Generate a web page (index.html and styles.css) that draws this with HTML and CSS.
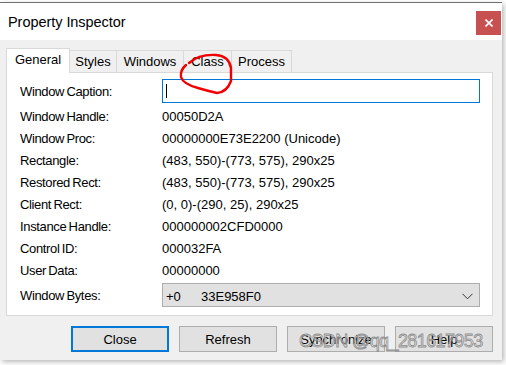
FILE: index.html
```html
<!DOCTYPE html>
<html>
<head>
<meta charset="utf-8">
<link rel="stylesheet" href="styles.css">
</head>
<body>
<div class="window">
  <div class="titlebar">
    <span class="title">Property Inspector</span>
    <div class="close-x">
      <svg width="8" height="8" viewBox="0 0 8 8"><path d="M0.5 0.5 L7.5 7.5 M7.5 0.5 L0.5 7.5" stroke="#fff" stroke-width="1.6"/></svg>
    </div>
  </div>
  <div class="content">
    <div class="tabs">
      <div class="tab tab-general active">General</div>
      <div class="tab tab-styles">Styles</div>
      <div class="tab tab-windows">Windows</div>
      <div class="tab tab-class">Class</div>
      <div class="tab tab-process">Process</div>
    </div>
    <div class="panel">
      <div class="grid">
        <div class="label row-first">Window Caption:</div>
        <div class="input"><span class="caret"></span></div>
        <div class="label">Window Handle:</div><div class="value">00050D2A</div>
        <div class="label">Window Proc:</div><div class="value">00000000E73E2200 (Unicode)</div>
        <div class="label">Rectangle:</div><div class="value">(483, 550)-(773, 575), 290x25</div>
        <div class="label">Restored Rect:</div><div class="value">(483, 550)-(773, 575), 290x25</div>
        <div class="label">Client Rect:</div><div class="value">(0, 0)-(290, 25), 290x25</div>
        <div class="label">Instance Handle:</div><div class="value">000000002CFD0000</div>
        <div class="label">Control ID:</div><div class="value">000032FA</div>
        <div class="label">User Data:</div><div class="value">00000000</div>
        <div class="label row-last">Window Bytes:</div>
        <div class="combo">
          <span class="combo-off">+0</span><span class="combo-val">33E958F0</span>
          <svg class="chev" width="11" height="7" viewBox="0 0 11 7"><path d="M0.5 0.8 L5.5 5.8 L10.5 0.8" fill="none" stroke="#333" stroke-width="1"/></svg>
        </div>
      </div>
    </div>
    <div class="buttons">
      <div class="btn default">Close</div>
      <div class="btn">Refresh</div>
      <div class="btn">Synchronize</div>
      <div class="btn">Help</div>
    </div>
  </div>
</div>
<svg class="annot" width="506" height="365" viewBox="0 0 506 365">
  <path d="M189 63 Q199 54 216 55 Q229 56 231 68 L231 81 Q227 92 217 93 Q208 91 198 88 Q183 84 181 77 Q180 70 186 65" fill="none" stroke="#f20000" stroke-width="2.4" stroke-linecap="round"/>
</svg>
<div class="watermark">CSDN @qq_281617953</div>
</body>
</html>
```

FILE: styles.css
```css
html, body {
  margin: 0;
  padding: 0;
}
body {
  width: 506px;
  height: 365px;
  background: #ffffff;
  position: relative;
  overflow: hidden;
  font-family: "Liberation Sans", Arial, sans-serif;
  font-size: 13px;
  color: #000;
}
.window {
  margin-top: 2px;
  width: 502px;
  height: 357px;
  border-top: 1px solid #707070;
  background: #f0f0f0;
  box-shadow: 2px 2px 5px rgba(0, 0, 0, 0.28);
  display: flex;
  flex-direction: column;
}
.titlebar {
  height: 37px;
  background: #ffffff;
  display: flex;
  align-items: center;
  justify-content: space-between;
  padding-left: 8px;
  flex-shrink: 0;
}
.title {
  font-size: 14.5px;
  letter-spacing: -0.05px;
  margin-top: 1px;
}
.close-x {
  width: 25px;
  height: 24px;
  background: #c75050;
  margin-right: 1px;
  margin-top: 2px;
  display: flex;
  align-items: center;
  justify-content: center;
}
.content {
  padding: 8px 9px 0 6px;
  display: flex;
  flex-direction: column;
}
.tabs {
  display: flex;
  align-items: flex-end;
  height: 24px;
  position: relative;
  z-index: 1;
}
.tab {
  box-sizing: border-box;
  height: 22px;
  border: 1px solid #d9d9d9;
  border-bottom: none;
  background: #f0f0f0;
  display: flex;
  align-items: center;
  justify-content: center;
  padding-bottom: 1px;
  margin-left: -1px;
}
.tab.active {
  height: 25px;
  margin-bottom: -1px;
  margin-left: 0;
  background: #ffffff;
  padding-bottom: 3px;
}
.tab-general { width: 64px; }
.tab-styles { width: 48px; }
.tab-windows { width: 68px; }
.tab-class { width: 49px; }
.tab-process { width: 61px; }
.panel {
  box-sizing: border-box;
  width: 487px;
  height: 244px;
  background: #ffffff;
  border: 1px solid #d9d9d9;
  padding: 6px 0 0 13px;
}
.grid {
  display: grid;
  grid-template-columns: 142px 318px;
  grid-template-rows: 23px 26px repeat(7, 22px) 24px;
}
.label, .value {
  line-height: 22px;
  white-space: nowrap;
}
.label {
  letter-spacing: -0.35px;
  word-spacing: -1px;
}
.row-first {
  line-height: 25px;
}
.grid > .label:nth-child(3),
.grid > .value:nth-child(4) {
  margin-top: 4px;
}
.row-last {
  line-height: 25px;
  margin-top: 1px;
}
.input {
  box-sizing: border-box;
  height: 24px;
  border: 1px solid #0078d7;
  background: #fff;
  display: flex;
  align-items: center;
  padding-left: 3px;
}
.caret {
  width: 1px;
  height: 14px;
  background: #000;
}
.combo {
  box-sizing: border-box;
  height: 24px;
  width: 318px;
  margin-top: 1px;
  background: #e1e1e1;
  border: 1px solid #adadad;
  display: flex;
  align-items: center;
  padding-left: 3px;
  padding-top: 2px;
}
.combo-off {
  width: 35px;
}
.chev {
  margin-left: auto;
  margin-right: 6px;
}
.buttons {
  display: flex;
  justify-content: flex-end;
  gap: 10px;
  margin-top: 10px;
}
.btn {
  box-sizing: border-box;
  width: 98px;
  height: 26px;
  background: #e1e1e1;
  border: 1px solid #adadad;
  display: flex;
  align-items: center;
  justify-content: center;
  padding-top: 1px;
}
.btn.default {
  border: 2px solid #0078d7;
}
.annot {
  position: absolute;
  left: 0;
  top: 0;
  z-index: 5;
  pointer-events: none;
}
.watermark {
  position: absolute;
  left: 299px;
  top: 331px;
  z-index: 6;
  font-size: 18px;
  letter-spacing: -0.6px;
  color: rgba(225, 225, 225, 0.6);
  -webkit-text-stroke: 0.8px rgba(125, 125, 125, 0.85);
  white-space: nowrap;
  pointer-events: none;
}
```
